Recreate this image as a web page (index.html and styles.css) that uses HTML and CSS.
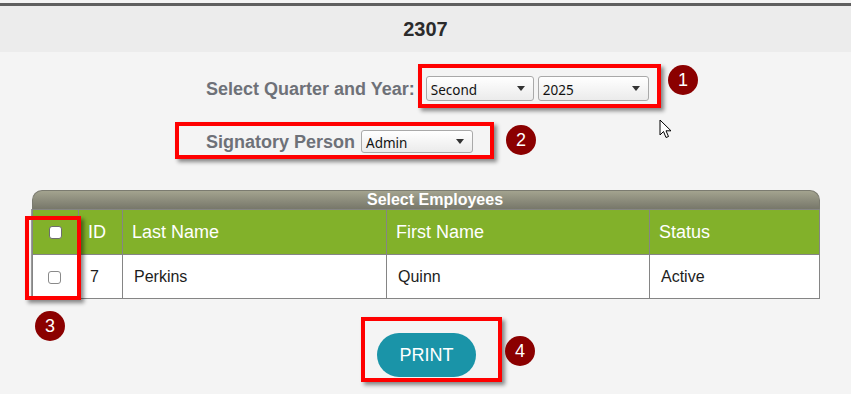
FILE: index.html
```html
<!DOCTYPE html>
<html>
<head>
<meta charset="utf-8">
<link rel="stylesheet" href="styles.css">
</head>
<body>
<div class="page">
  <header class="header"><h1 class="title">2307</h1></header>

  <div class="form">
    <div class="row row-quarter">
      <span class="label">Select Quarter and Year:</span>
      <div class="select w108"><span class="sel-text">Second</span><span class="caret"></span></div>
      <div class="select w111"><span class="sel-text">2025</span><span class="caret"></span></div>
    </div>
    <div class="row row-sign">
      <span class="label">Signatory Person</span>
      <div class="select w112 short"><span class="sel-text">Admin</span><span class="caret"></span></div>
    </div>
  </div>

  <div class="table-wrap">
    <div class="caption">Select Employees</div>
    <table class="grid">
      <thead>
        <tr>
          <th class="c-check"><span class="cb cb-head"></span></th>
          <th class="c-id">ID</th>
          <th class="c-last">Last Name</th>
          <th class="c-first">First Name</th>
          <th class="c-status">Status</th>
        </tr>
      </thead>
      <tbody>
        <tr>
          <td class="c-check"><span class="cb"></span></td>
          <td class="c-id">7</td>
          <td>Perkins</td>
          <td>Quinn</td>
          <td>Active</td>
        </tr>
      </tbody>
    </table>
  </div>

  <div class="actions"><button class="print">PRINT</button></div>

  <div class="mark box1"></div>
  <div class="mark box2"></div>
  <div class="mark box3"></div>
  <div class="mark box4"></div>
  <div class="badge b1">1</div>
  <div class="badge b2">2</div>
  <div class="badge b3">3</div>
  <div class="badge b4">4</div>

  <svg class="cursor" width="14" height="21" viewBox="0 0 14 21">
    <path d="M1 1 L1 16 L4.5 12.5 L7 18.5 L9.5 17.5 L7 11.8 L12 11.8 Z" fill="#fff" stroke="#000" stroke-width="1" stroke-linejoin="round"/>
  </svg>
</div>
</body>
</html>
```

FILE: styles.css
```css
* { box-sizing: border-box; }
html, body { margin: 0; padding: 0; }
body {
  background: #f4f4f4;
  font-family: "Liberation Sans", Arial, sans-serif;
  width: 851px;
  height: 394px;
  overflow: hidden;
}
.page {
  position: relative;
  width: 851px;
  height: 394px;
  padding-top: 3px;
}
.header {
  border-top: 3px solid #5f5f5f;
  background: #ececec;
  height: 49px;
  display: flex;
  align-items: center;
  justify-content: center;
}
.title {
  margin: 0;
  font-size: 20px;
  font-weight: bold;
  color: #2b2b2b;
  padding-top: 1px;
}
.form {
  padding-left: 206px;
  padding-top: 24px;
  display: flex;
  flex-direction: column;
  gap: 29px;
}
.row {
  display: flex;
  align-items: center;
}
.row-quarter .label { margin-right: 11px; }
.row-quarter .select + .select { margin-left: 4px; }
.row-sign .label { margin-right: 6px; }
.label {
  font-size: 18px;
  font-weight: bold;
  color: #6e7178;
  position: relative;
  top: 1px;
}
.select {
  height: 25px;
  border: 1px solid #a9a9a9;
  border-radius: 3px;
  background: linear-gradient(#ffffff, #ebebeb);
  display: flex;
  align-items: center;
  justify-content: space-between;
  padding: 0 8px 0 4px;
  font-family: "Noto Sans", "Open Sans", sans-serif;
  font-size: 13.5px;
  color: #111;
}
.select.short { height: 23px; }
.sel-text { position: relative; top: 1px; }
.w108 { width: 108px; }
.w111 { width: 111px; }
.w112 { width: 112px; }
.caret {
  width: 0; height: 0;
  border-left: 4px solid transparent;
  border-right: 4px solid transparent;
  border-top: 5px solid #333;
}
.table-wrap {
  margin: 37px 31px 0 32px;
}
.caption {
  height: 19px;
  border-radius: 10px 10px 0 0;
  background: linear-gradient(#a3a38f, #77776a);
  border: 1px solid #7b7b70;
  border-bottom: none;
  color: #fff;
  font-weight: bold;
  font-size: 16px;
  text-align: center;
  line-height: 18px;
  padding-left: 18px;
}
.grid {
  width: 788px;
  border-collapse: collapse;
  box-shadow: -1px 0 0 #9a9a9a;
}
.grid th, .grid td {
  border: 1px solid #858585;
  text-align: left;
}
.grid th {
  background: #82b12a;
  color: #fff;
  font-weight: normal;
  font-size: 18px;
  height: 45px;
  padding: 0 0 0 9px;
}
.grid td {
  background: #fff;
  color: #1d1d1d;
  height: 44px;
  font-size: 16px;
  padding: 0 0 0 11px;
}
.grid .c-check { width: 46px; text-align: center; padding: 0; }
.grid .c-id { width: 44px; }
.grid .c-last { width: 264px; }
.grid .c-first { width: 263px; }
.cb {
  display: inline-block;
  width: 13px;
  height: 13px;
  border: 1px solid #8a8a8a;
  border-radius: 3px;
  background: #fff;
  vertical-align: middle;
}
.cb-head { border-color: #6d6d6d; }
.grid td .cb { margin-left: -2px; }
.actions {
  display: flex;
  justify-content: center;
  padding-top: 34px;
  padding-left: 2px;
}
.print {
  width: 99px;
  height: 44px;
  border: none;
  border-radius: 22px;
  background: #1a94a8;
  color: #fff;
  font-family: "Liberation Sans", Arial, sans-serif;
  font-size: 18px;
  padding: 0;
}
.mark {
  position: absolute;
  border: 4px solid #ff0000;
  box-shadow: 3px 3px 4px rgba(0,0,0,0.45);
}
.box1 { left: 418px; top: 64px; width: 243px; height: 44px; }
.box2 { left: 175px; top: 122px; width: 319px; height: 37px; }
.box3 { left: 25px; top: 216px; width: 56px; height: 84px; }
.box4 { left: 361px; top: 317px; width: 141px; height: 65px; }
.badge {
  position: absolute;
  width: 30px;
  height: 30px;
  border-radius: 50%;
  background: #8b0000;
  color: #fff;
  font-size: 18px;
  text-align: center;
  line-height: 30px;
}
.b1 { left: 668px; top: 65px; }
.b2 { left: 506px; top: 125px; }
.b3 { left: 35px; top: 311px; }
.b4 { left: 505px; top: 336px; }
.cursor {
  position: absolute;
  left: 659px;
  top: 119px;
}
```
